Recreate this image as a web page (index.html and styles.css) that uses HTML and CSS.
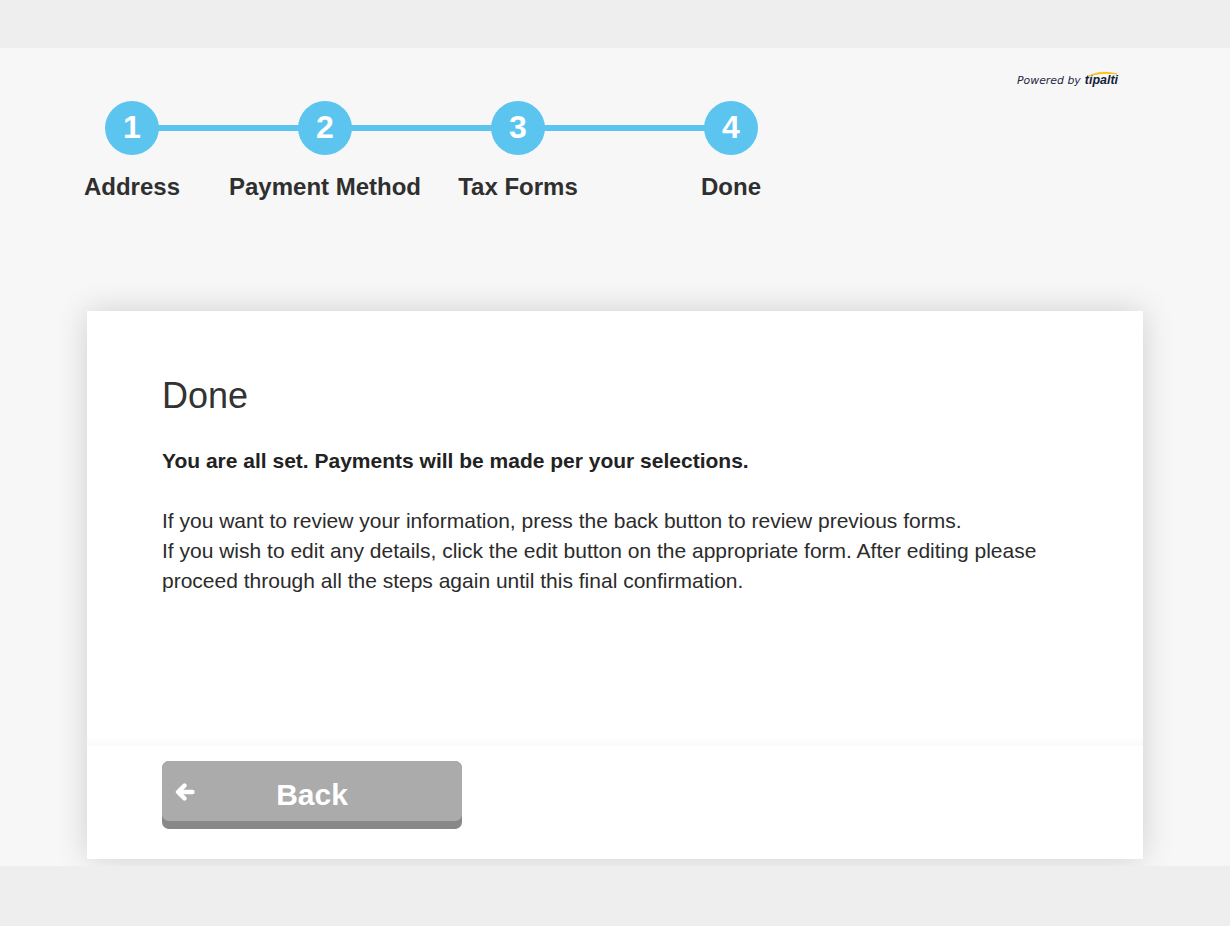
FILE: index.html
```html
<!DOCTYPE html>
<html lang="en">
<head>
    <meta charset="UTF-8">
    <meta name="viewport" content="width=device-width, initial-scale=1.0">
    <title>Done</title>
    <link rel="stylesheet" href="styles.css">
</head>
<body>
    <div class="top-bar"></div>

    <div class="main">
        <div class="powered">
            <span class="powered-by">Powered by</span>
            <span class="brand">tipalti
                <svg class="brand-arc" width="30" height="6" viewBox="0 0 30 6">
                    <path d="M1 5 C8 1 18 0 29 3 C20 2 10 2 1 5 Z" fill="#f8c012" stroke="#f8c012" stroke-width="0.8"/>
                </svg>
            </span>
        </div>

        <div class="steps">
            <div class="steps-line"></div>
            <div class="step">
                <div class="step-num">1</div>
                <div class="step-label">Address</div>
            </div>
            <div class="step">
                <div class="step-num">2</div>
                <div class="step-label">Payment Method</div>
            </div>
            <div class="step">
                <div class="step-num">3</div>
                <div class="step-label">Tax Forms</div>
            </div>
            <div class="step">
                <div class="step-num">4</div>
                <div class="step-label">Done</div>
            </div>
        </div>

        <div class="card">
            <div class="card-body">
                <h1>Done</h1>
                <p class="lead">You are all set. Payments will be made per your selections.</p>
                <p class="info">If you want to review your information, press the back button to review previous forms.<br>If you wish to edit any details, click the edit button on the appropriate form. After editing please proceed through all the steps again until this final confirmation.</p>
            </div>
            <div class="card-footer">
                <button class="back-btn">
                    <span class="back-face">
                        <svg class="back-icon" width="20" height="20" viewBox="0 0 20 20">
                            <path d="M9.5 3.5 L3 10 L9.5 16.5 M4 10 H17.5" fill="none" stroke="#fff" stroke-width="4.4" stroke-linejoin="round" stroke-linecap="round"/>
                        </svg>
                        Back
                    </span>
                </button>
            </div>
        </div>
    </div>

    <div class="bottom-bar"></div>
</body>
</html>
```

FILE: styles.css
```css
* {
    box-sizing: border-box;
}
body {
    margin: 0;
    font-family: "Liberation Sans", Arial, sans-serif;
    background: #eeeeee;
    color: #2b2b2b;
}
.top-bar {
    height: 48px;
    background: #eeeeee;
}
.bottom-bar {
    height: 60px;
    background: #eeeeee;
}
.main {
    position: relative;
    height: 818px;
    padding: 53px 87px 0;
    background: #f7f7f7;
    overflow: hidden;
}
.powered {
    position: absolute;
    top: 25px;
    left: 1017px;
    display: flex;
    align-items: baseline;
    gap: 4px;
    color: #1d2a3f;
    white-space: nowrap;
}
.powered-by {
    font-family: "DejaVu Sans", sans-serif;
    font-size: 10.9px;
    font-style: italic;
}
.brand {
    position: relative;
    font-size: 12.5px;
    font-weight: bold;
    font-style: italic;
    color: #14233a;
}
.brand-arc {
    position: absolute;
    top: -2px;
    left: 3px;
}
.steps {
    position: relative;
    display: grid;
    grid-template-columns: 193px 193px 193px 233px;
    margin-left: -51.5px;
    width: 812px;
}
.steps-line {
    position: absolute;
    top: 24px;
    left: 96.5px;
    width: 599px;
    height: 6px;
    background: #5bc5ef;
}
.step {
    position: relative;
    display: flex;
    flex-direction: column;
    align-items: center;
}
.step-num {
    width: 54px;
    height: 54px;
    border-radius: 50%;
    background: #5bc5ef;
    color: #fff;
    font-size: 32px;
    font-weight: bold;
    line-height: 53px;
    text-align: center;
}
.step-label {
    margin-top: 18px;
    font-size: 24px;
    font-weight: bold;
    line-height: 28px;
    white-space: nowrap;
    color: #2f2f2f;
}
.card {
    margin-top: 110px;
    width: 1056px;
    height: 548px;
    background: #fff;
    box-shadow: 0 0 30px rgba(0, 0, 0, 0.16);
    display: flex;
    flex-direction: column;
}
.card-body {
    height: 435px;
    padding: 63px 75px 0;
    background: linear-gradient(to bottom, #fff 425px, #fafafa 435px);
}
h1 {
    margin: 0;
    font-size: 36px;
    font-weight: normal;
    line-height: 44px;
    color: #333;
}
.lead {
    margin: 28px 0 0;
    font-size: 21px;
    font-weight: bold;
    line-height: 30px;
    color: #222;
}
.info {
    margin: 30px 0 0;
    font-size: 21px;
    line-height: 30px;
    color: #2b2b2b;
}
.card-footer {
    padding: 15px 75px 0;
}
.back-btn {
    display: flex;
    align-items: flex-start;
    width: 300px;
    height: 68px;
    padding: 0;
    border: 0;
    border-radius: 7px;
    background: #888888;
    color: #fff;
    font-family: inherit;
    font-size: 30px;
    font-weight: bold;
}
.back-face {
    position: relative;
    display: block;
    width: 100%;
    height: 60px;
    padding-top: 16px;
    border-radius: 7px;
    background: #ababab;
    line-height: 36px;
    text-align: center;
}
.back-icon {
    position: absolute;
    top: 21px;
    left: 13px;
}
```
